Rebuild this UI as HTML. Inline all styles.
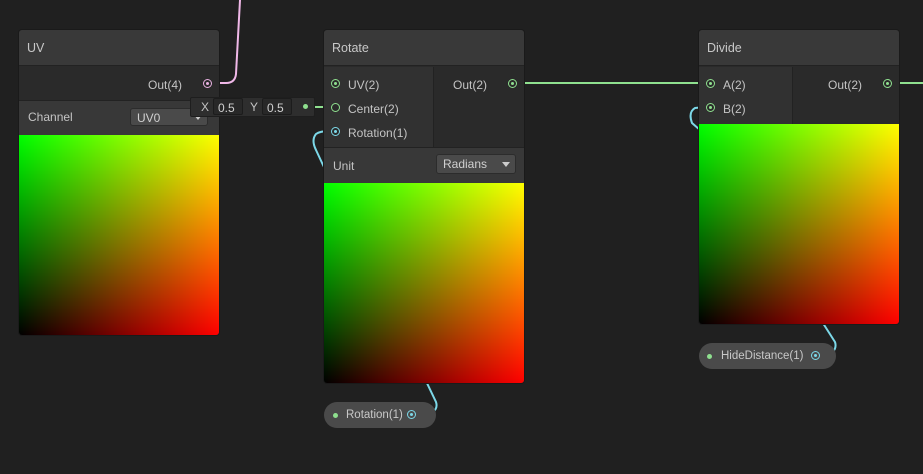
<!DOCTYPE html>
<html><head><meta charset="utf-8"><style>
*{margin:0;padding:0;box-sizing:border-box}
body{width:923px;height:474px;background:#202020;position:relative;overflow:hidden;font-family:"Liberation Sans",sans-serif;font-size:12px;color:#c4c4c4}
.a{position:absolute}
.node{position:absolute;background:#2a2a2a;border-radius:3px;overflow:hidden;box-shadow:0 0 0 1px #1a1a1a}
.hdr{position:absolute;left:0;right:0;top:0;height:36px;background:#393939;border-bottom:1px solid #222;color:#c8c8c8;font-size:12.5px;padding:11px 0 0 8px}
.prev{position:absolute;left:0;width:200px;height:200px;background:linear-gradient(to right,#000,#f00)}
.prev:after{content:"";position:absolute;inset:0;background:linear-gradient(to top,#000,#0f0);mix-blend-mode:screen}
.port{position:absolute;width:9px;height:9px;border-radius:50%;border:1.5px solid #8fe08f;background:#2a2a2a}
.port:after{content:"";position:absolute;left:1.5px;top:1.5px;width:3px;height:3px;border-radius:50%;background:#8fe08f}
.pk{border-color:#e8b0e0}.pk:after{background:#e8b0e0}
.cy{border-color:#7cd8e8}.cy:after{background:#7cd8e8}
.hollow:after{display:none}
.dd{position:absolute;background:#4a4a4a;border-radius:3px;border:1px solid #2c2c2c;color:#d0d0d0;padding:2px 0 0 6px;height:18px}
.pill{position:absolute;height:26px;border-radius:13px;background:#4a4a4a;color:#c8c8c8;padding:7px 0 0 22px;font-size:11.5px}
.dot{position:absolute;width:5px;height:5px;border-radius:50%;background:#8fe08f}
.arr{position:absolute;right:5px;top:6px;border:4px solid transparent;border-top:5px solid #ccc;border-bottom:0}
</style></head><body>
<svg class="a" style="left:0;top:0" width="923" height="474">
<defs><linearGradient id="pg" x1="0" x2="1"><stop offset="0" stop-color="#f0b8e8"/><stop offset="1" stop-color="#9be89b"/></linearGradient></defs>
<path d="M240 0 L236 74 Q235 83 226 83 L216 83" stroke="#f0b8e8" stroke-width="2" fill="none"/>
<path d="M216 83 L324 83" stroke="url(#pg)" stroke-width="2" fill="none"/>
<path d="M524 83 L699 83 M899 83 L923 83" stroke="#8fe08f" stroke-width="2" fill="none"/>
<path d="M305 107 L324 107" stroke="#8fe08f" stroke-width="2" fill="none"/>
<path d="M416 414 L433 412 Q438 408 436 402 L330 180 L316 150 Q311 140 316 134 Q320 131 330 131" stroke="#7cd8e8" stroke-width="2" fill="none"/>
<path d="M816 356 L832 353 Q837 348 835 342 L700 130 L692 123 Q688 112 695 108 L705 107" stroke="#7cd8e8" stroke-width="2" fill="none"/>
</svg>

<div class="node" style="left:19px;top:30px;width:200px;height:305px">
<div class="hdr">UV</div>
<div class="a" style="left:0;top:37px;width:200px;height:33px;background:#2a2a2a"></div>
<div class="a" style="right:37px;top:48px">Out(4)</div>
<div class="port pk" style="left:184px;top:49px"></div>
<div class="a" style="left:0;top:70px;width:200px;height:35px;background:#383838;border-top:1px solid #222"></div>
<div class="a" style="left:9px;top:80px">Channel</div>
<div class="dd" style="left:111px;top:78px;width:78px">UV0<span class="arr"></span></div>
<div class="prev" style="top:105px"></div>
</div>

<div class="a" style="left:190px;top:97px;width:125px;height:20px;background:#2e2e2e;border:1px solid #1e1e1e;border-radius:2px"></div>
<div class="a" style="left:201px;top:100px;color:#c4c4c4">X</div>
<div class="a" style="left:213px;top:98px;width:30px;height:17px;background:#282828;border:1px solid #1c1c1c;border-radius:2px;padding:2px 0 0 4px;color:#d0d0d0">0.5</div>
<div class="a" style="left:250px;top:100px">Y</div>
<div class="a" style="left:262px;top:98px;width:30px;height:17px;background:#282828;border:1px solid #1c1c1c;border-radius:2px;padding:2px 0 0 4px;color:#d0d0d0">0.5</div>
<div class="dot" style="left:303px;top:104px"></div>

<div class="node" style="left:324px;top:30px;width:200px;height:353px">
<div class="hdr">Rotate</div>
<div class="a" style="left:0;top:37px;width:110px;height:80px;background:#313131;border-right:1px solid #222"></div>
<div class="port" style="left:7px;top:49px"></div><div class="a" style="left:24px;top:48px">UV(2)</div>
<div class="port hollow" style="left:7px;top:73px"></div><div class="a" style="left:24px;top:72px">Center(2)</div>
<div class="port cy" style="left:7px;top:97px"></div><div class="a" style="left:24px;top:96px">Rotation(1)</div>
<div class="a" style="right:37px;top:48px">Out(2)</div>
<div class="port" style="left:184px;top:49px"></div>
<div class="a" style="left:0;top:117px;width:200px;height:36px;background:#383838;border-top:1px solid #222"></div>
<div class="a" style="left:9px;top:129px">Unit</div>
<div class="dd" style="left:112px;top:124px;width:80px;height:20px">Radians<span class="arr" style="top:7px"></span></div>
<div class="prev" style="top:153px"></div>
</div>

<div class="node" style="left:699px;top:30px;width:200px;height:294px">
<div class="hdr">Divide</div>
<div class="a" style="left:0;top:37px;width:94px;height:57px;background:#313131;border-right:1px solid #222"></div>
<div class="port" style="left:7px;top:49px"></div><div class="a" style="left:24px;top:48px">A(2)</div>
<div class="port" style="left:7px;top:73px"></div><div class="a" style="left:24px;top:72px">B(2)</div>
<div class="a" style="right:37px;top:48px">Out(2)</div>
<div class="port" style="left:184px;top:49px"></div>
<div class="prev" style="top:94px"></div>
</div>

<div class="pill" style="left:324px;top:402px;width:112px">Rotation(1)</div>
<div class="dot" style="left:333px;top:413px"></div>
<div class="port cy" style="left:407px;top:410px;background:#4a4a4a"></div>
<div class="pill" style="left:699px;top:343px;width:137px">HideDistance(1)</div>
<div class="dot" style="left:707px;top:354px"></div>
<div class="port cy" style="left:811px;top:351px;background:#4a4a4a"></div>
</body></html>
